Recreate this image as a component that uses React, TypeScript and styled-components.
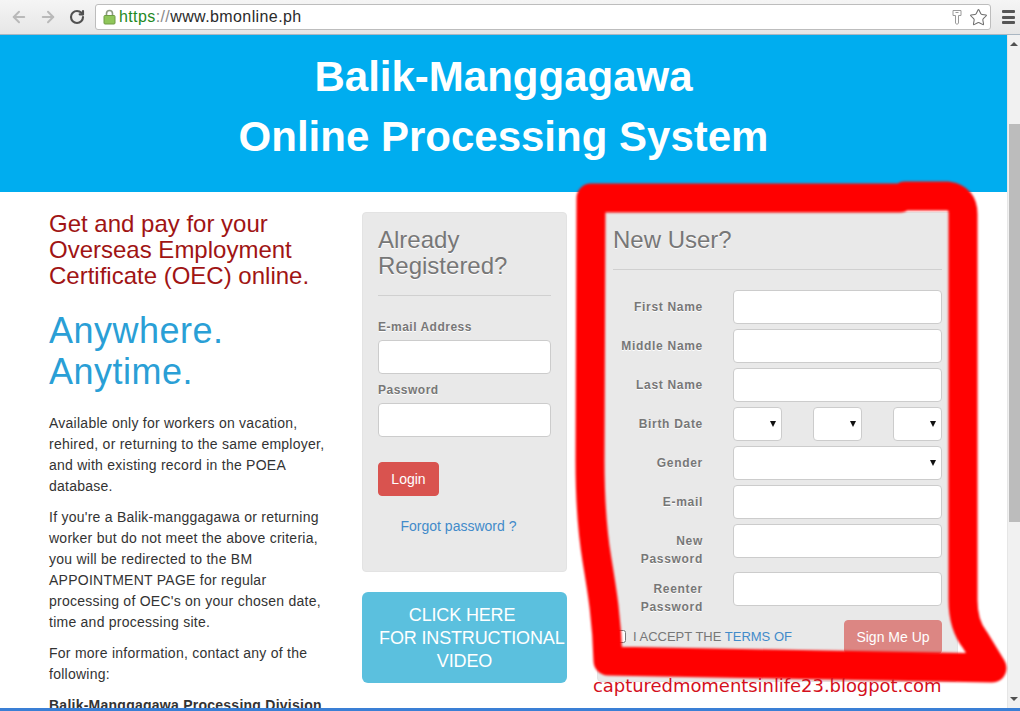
import styled, { createGlobalStyle } from "styled-components";
import { ArrowLeft, ArrowRight, RotateCw, Star } from "lucide-react";

const GlobalStyle = createGlobalStyle`
    html, body {
        margin: 0;
        padding: 0;
        height: 100%;
        overflow: hidden;
        background: #fff;
        font-family: "Liberation Sans", Arial, sans-serif;
    }
    * {
        box-sizing: border-box;
    }
`;

type RowProps = { label: string[]; children: React.ReactNode };

function FormRow({ label, children }: RowProps) {
    return (
        <Row>
            <RowLabel>
                {label.map((line) => (
                    <div key={line}>{line}</div>
                ))}
            </RowLabel>
            <RowField>{children}</RowField>
        </Row>
    );
}

export default function App() {
    return (
        <Page>
            <GlobalStyle />
            <Toolbar>
                <NavButton $dim>
                    <ArrowLeft size={18} strokeWidth={2.6} />
                </NavButton>
                <NavButton $dim>
                    <ArrowRight size={18} strokeWidth={2.6} />
                </NavButton>
                <NavButton>
                    <RotateCw size={16} strokeWidth={3.2} />
                </NavButton>
                <Omnibox>
                    <svg width="13" height="16" viewBox="0 0 13 16">
                        <path d="M3.5 7V4.5a3 3 0 0 1 6 0V7" fill="none" stroke="#8d9a82" strokeWidth="1.6" />
                        <rect x="1" y="6.5" width="11" height="8.5" rx="1" fill="#8fc65a" stroke="#6f9c45" />
                    </svg>
                    <Url>
                        <UrlScheme>https</UrlScheme>
                        <UrlSep>://</UrlSep>www.bmonline.ph
                    </Url>
                    <OmniIcons>
                        <svg width="10" height="16" viewBox="0 0 10 16">
                            <path
                                d="M1 1.5h8v5H6.5v7.5l-1 1.200h-1l-1-1.200V6.500H1z M3.500 3.500h3"
                                fill="#fff"
                                stroke="#9a9a9a"
                                strokeWidth="1"
                            />
                        </svg>
                        <Star size={19} strokeWidth={1.3} color="#6c6c6c" />
                    </OmniIcons>
                </Omnibox>
                <MenuIcon>
                    <span />
                    <span />
                    <span />
                </MenuIcon>
            </Toolbar>

            <Viewport>
                <Main>
                    <Hero>
                        <HeroTitle>Balik-Manggagawa</HeroTitle>
                        <HeroTitle>Online Processing System</HeroTitle>
                    </Hero>

                    <Columns>
                        <InfoColumn>
                            <Lead>
                                Get and pay for your Overseas Employment Certificate (OEC) online.
                            </Lead>
                            <Slogan>
                                Anywhere.
                                <br />
                                Anytime.
                            </Slogan>
                            <Paragraph>
                                Available only for workers on vacation, rehired, or returning to the
                                same employer, and with existing record in the POEA database.
                            </Paragraph>
                            <Paragraph>
                                If you're a Balik-manggagawa or returning worker but do not meet the
                                above criteria, you will be redirected to the BM APPOINTMENT PAGE for
                                regular processing of OEC's on your chosen date, time and processing
                                site.
                            </Paragraph>
                            <Paragraph>
                                For more information, contact any of the following:
                            </Paragraph>
                            <Paragraph>
                                <strong>Balik-Manggagawa Processing Division</strong>
                            </Paragraph>
                        </InfoColumn>

                        <LoginColumn>
                            <Panel>
                                <PanelTitle>Already Registered?</PanelTitle>
                                <Divider />
                                <StackLabel>E-mail Address</StackLabel>
                                <TextInput />
                                <StackLabel $next>Password</StackLabel>
                                <TextInput />
                                <LoginButton>Login</LoginButton>
                                <ForgotLink>Forgot password ?</ForgotLink>
                            </Panel>
                            <VideoButton>
                                CLICK HERE&nbsp;
                                <br />
                                &nbsp;&nbsp;&nbsp;FOR INSTRUCTIONAL
                                <br />
                                VIDEO
                            </VideoButton>
                        </LoginColumn>

                        <SignupPanel>
                            <PanelTitle>New User?</PanelTitle>
                            <Divider $wide />
                            <FormRow label={["First Name"]}>
                                <TextInput />
                            </FormRow>
                            <FormRow label={["Middle Name"]}>
                                <TextInput />
                            </FormRow>
                            <FormRow label={["Last Name"]}>
                                <TextInput />
                            </FormRow>
                            <FormRow label={["Birth Date"]}>
                                <DateSelects>
                                    <SelectBox $narrow />
                                    <SelectBox $narrow />
                                    <SelectBox $narrow />
                                </DateSelects>
                            </FormRow>
                            <FormRow label={["Gender"]}>
                                <SelectBox />
                            </FormRow>
                            <FormRow label={["E-mail"]}>
                                <TextInput />
                            </FormRow>
                            <FormRow label={["New", "Password"]}>
                                <TextInput />
                            </FormRow>
                            <FormRow label={["Reenter", "Password"]}>
                                <TextInput />
                            </FormRow>
                            <TermsRow>
                                <TermsCheck />
                                <TermsText>
                                    I accept the <TermsLink>Terms of</TermsLink>{" "}
                                    <TermsLink>Service</TermsLink>
                                </TermsText>
                                <SignUpButton>Sign Me Up</SignUpButton>
                            </TermsRow>
                        </SignupPanel>
                    </Columns>
                </Main>

                <Scrollbar>
                    <ScrollArrow $up />
                    <ScrollThumb />
                    <ScrollArrow />
                </Scrollbar>
            </Viewport>
            <BottomLine />

            <Marker viewBox="0 0 1020 711" width="1020" height="711">
                <path
                    d="M591 198 L900 198 M905 196 L948 196 Q963 198 963 214 L963 600 Q963 625 975 640 L992 668 L608 661 C607 620 602 590 597 560 C592 530 590 500 590 460 L591 198"
                    fill="none"
                    stroke="#ff0000"
                    strokeWidth="29"
                    strokeLinecap="round"
                    strokeLinejoin="round"
                />
            </Marker>
            <Watermark>capturedmomentsinlife23.blogpot.com</Watermark>
        </Page>
    );
}

const Page = styled.div`
    position: relative;
    width: 1020px;
    height: 711px;
    overflow: hidden;
    display: flex;
    flex-direction: column;
`;

const Toolbar = styled.header`
    height: 35px;
    flex: none;
    display: flex;
    align-items: flex-start;
    padding: 4px 5px 0 8px;
    background: linear-gradient(#f5f5f5, #e6e6e6);
    border-bottom: 1px solid #a9b6c2;
`;

const NavButton = styled.div<{ $dim?: boolean }>`
    width: 22px;
    height: 26px;
    display: flex;
    align-items: center;
    justify-content: center;
    color: ${(p) => (p.$dim ? "#b9b9b9" : "#505050")};
    & + & {
        margin-left: 7px;
    }
`;

const Omnibox = styled.div`
    width: 897px;
    height: 26px;
    margin-left: 7px;
    display: flex;
    align-items: center;
    padding: 0 2px 0 7px;
    background: #fff;
    border: 1px solid #bdbdbd;
    border-radius: 3px;
`;

const Url = styled.div`
    margin-left: 3px;
    font-size: 16px;
    letter-spacing: 0.4px;
    color: #2b2b2b;
`;

const UrlScheme = styled.span`
    color: #1f8a1f;
`;

const UrlSep = styled.span`
    color: #8a8a8a;
`;

const OmniIcons = styled.div`
    margin-left: auto;
    display: flex;
    align-items: center;
    gap: 7px;
`;

const MenuIcon = styled.div`
    width: 13px;
    height: 14px;
    margin: 6px 0 0 11px;
    display: flex;
    flex-direction: column;
    justify-content: space-between;
    span {
        display: block;
        height: 3px;
        background: #555;
        border-radius: 1px;
    }
`;

const Viewport = styled.div`
    flex: 1;
    min-height: 0;
    display: flex;
`;

const Main = styled.main`
    width: 1007px;
    flex: none;
    overflow: hidden;
`;

const Hero = styled.div`
    height: 157px;
    padding-top: 12px;
    background: #00adef;
`;

const HeroTitle = styled.h1`
    margin: 0;
    font-size: 42px;
    line-height: 60px;
    font-weight: 700;
    color: #fff;
    text-align: center;
`;

const Columns = styled.div`
    display: flex;
    align-items: flex-start;
    padding: 20px 0 0 49px;
`;

const InfoColumn = styled.div`
    width: 313px;
    flex: none;
    padding-right: 30px;
`;

const Lead = styled.div`
    margin-top: -1px;
    font-size: 24px;
    line-height: 26px;
    color: #a01414;
`;

const Slogan = styled.div`
    margin: 21px 0 21px;
    font-size: 36px;
    line-height: 41px;
    letter-spacing: 0.5px;
    color: #2a9fd6;
`;

const Paragraph = styled.p`
    margin: 0 0 10px;
    font-size: 14px;
    line-height: 21px;
    letter-spacing: 0.25px;
    color: #333;
`;

const LoginColumn = styled.div`
    width: 205px;
    flex: none;
`;

const Panel = styled.section`
    height: 360px;
    padding: 14px 15px 15px;
    background: #e9e9e9;
    border: 1px solid #e3e3e3;
    border-radius: 4px;
`;

const SignupPanel = styled(Panel)`
    width: 361px;
    height: 470px;
    margin-left: 30px;
`;

const PanelTitle = styled.h3`
    margin: 0;
    font-size: 24px;
    font-weight: 400;
    line-height: 26px;
    color: #777;
    text-shadow: 0 1px 0 #fff;
`;

const Divider = styled.hr<{ $wide?: boolean }>`
    margin: 16px 0 ${(p) => (p.$wide ? "20px" : "22px")};
    border: 0;
    border-top: 1px solid #d0d0d0;
`;

const StackLabel = styled.label<{ $next?: boolean }>`
    display: block;
    margin: ${(p) => (p.$next ? "7px" : "0")} 0 4px;
    font-size: 12px;
    line-height: 18px;
    font-weight: 700;
    letter-spacing: 0.5px;
    color: #777;
    text-shadow: 0 1px 0 #fff;
`;

const TextInput = styled.input.attrs({ type: "text" })`
    display: block;
    width: 100%;
    height: 34px;
    padding: 6px 12px;
    background: #fff;
    border: 1px solid #ccc;
    border-radius: 4px;
    outline: none;
`;

const LoginButton = styled.button`
    display: block;
    width: 61px;
    height: 34px;
    margin-top: 25px;
    padding: 0;
    background: #d9534f;
    border: 1px solid #d9534f;
    border-radius: 4px;
    font-family: inherit;
    font-size: 14px;
    color: #fff;
`;

const ForgotLink = styled.a`
    display: block;
    margin-top: 20px;
    padding-right: 12px;
    font-size: 14px;
    line-height: 20px;
    text-align: center;
    color: #428bca;
`;

const VideoButton = styled.a`
    display: block;
    height: 91px;
    margin-top: 20px;
    padding-top: 12px;
    background: #5bc0de;
    border-radius: 6px;
    font-size: 18px;
    line-height: 23px;
    letter-spacing: -0.15px;
    text-align: center;
    white-space: nowrap;
    color: #fff;
`;

const Row = styled.div`
    display: flex;
    margin-bottom: 5px;
`;

const RowLabel = styled.div`
    width: 90px;
    flex: none;
    margin-bottom: -1px;
    padding-top: 8px;
    font-size: 12px;
    line-height: 18px;
    font-weight: 700;
    letter-spacing: 0.7px;
    text-align: right;
    white-space: nowrap;
    color: #777;
    text-shadow: 0 1px 0 #fff;
`;

const RowField = styled.div`
    flex: 1;
    margin-left: 30px;
`;

const DateSelects = styled.div`
    display: flex;
    justify-content: space-between;
`;

const SelectBox = styled.div<{ $narrow?: boolean }>`
    position: relative;
    width: ${(p) => (p.$narrow ? "49px" : "100%")};
    height: 34px;
    background: #fff;
    border: 1px solid #ccc;
    border-radius: 4px;
    &::after {
        content: "";
        position: absolute;
        right: 5px;
        top: 13px;
        border-left: 3px solid transparent;
        border-right: 3px solid transparent;
        border-top: 6px solid #111;
    }
`;

const TermsRow = styled.div`
    display: flex;
    align-items: flex-start;
`;

const TermsCheck = styled.input.attrs({ type: "checkbox" })`
    width: 13px;
    height: 13px;
    margin: 10px 7px 0 0;
    flex: none;
`;

const TermsText = styled.div`
    width: 190px;
    flex: none;
    padding-top: 8px;
    font-size: 13px;
    line-height: 18px;
    text-transform: uppercase;
    color: #777;
`;

const TermsLink = styled.a`
    color: #428bca;
`;

const SignUpButton = styled.button`
    width: 98px;
    height: 34px;
    margin-left: auto;
    padding: 0;
    background: #dc8683;
    border: 1px solid #dc8683;
    border-radius: 4px;
    font-family: inherit;
    font-size: 14px;
    color: #fff;
`;

const Scrollbar = styled.div`
    width: 13px;
    flex: none;
    display: flex;
    flex-direction: column;
    align-items: flex-end;
    background: #f1f1f1;
    border-left: 1px solid #e6e6e6;
`;

const ScrollArrow = styled.div<{ $up?: boolean }>`
    width: 8px;
    height: 0;
    margin: ${(p) => (p.$up ? "7px 2px 0" : "auto 2px 7px")};
    border-left: 4px solid transparent;
    border-right: 4px solid transparent;
    ${(p) => (p.$up ? "border-bottom: 4px solid #505050;" : "border-top: 4px solid #505050;")}
`;

const ScrollThumb = styled.div`
    width: 11px;
    height: 398px;
    margin-top: 78px;
    background: #bcbcbc;
`;

const BottomLine = styled.div`
    height: 3px;
    flex: none;
    background: #3a7fd5;
`;

const Marker = styled.svg`
    position: absolute;
    left: 0;
    top: 0;
    filter: blur(1px);
    pointer-events: none;
`;

const Watermark = styled.div`
    position: absolute;
    left: 593px;
    top: 674px;
    font-family: "DejaVu Sans", sans-serif;
    font-size: 18px;
    line-height: 24px;
    letter-spacing: -0.05px;
    color: #d4101c;
    white-space: nowrap;
`;
